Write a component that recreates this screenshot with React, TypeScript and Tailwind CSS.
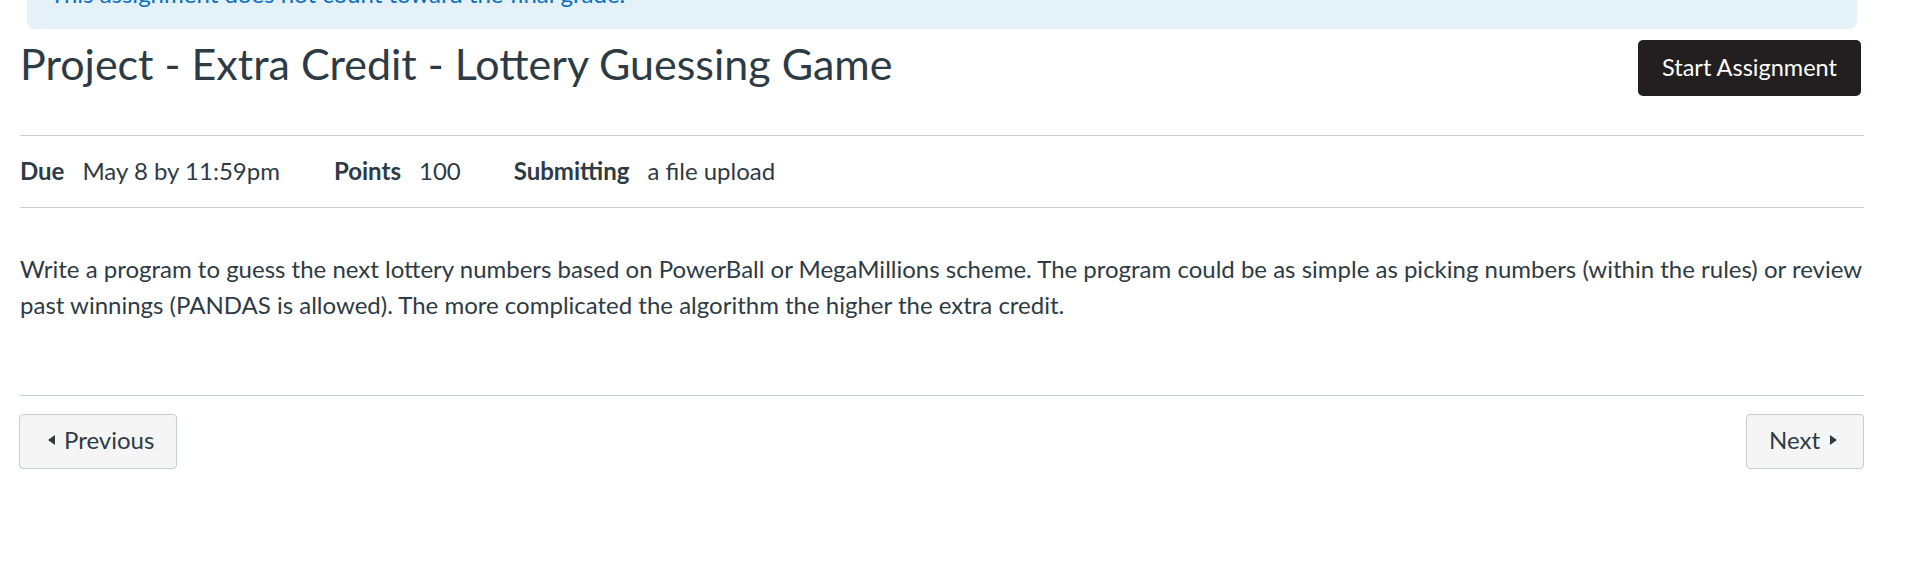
import React from "react";

function TriLeft() {
  return (
    <svg width="7" height="10" viewBox="0 0 7 10" className="shrink-0">
      <path d="M7 0 L0 5 L7 10 Z" fill="#2d3b45" />
    </svg>
  );
}

function TriRight() {
  return (
    <svg width="7" height="10" viewBox="0 0 7 10" className="shrink-0">
      <path d="M0 0 L7 5 L0 10 Z" fill="#2d3b45" />
    </svg>
  );
}

export default function App() {
  return (
    <div
      className="min-h-[580px] bg-white overflow-hidden text-[#2d3b45]"
      style={{ fontFamily: "Lato, 'Open Sans', 'Liberation Sans', sans-serif" }}
    >
      <div className="ml-[20px] w-[1844px]">
        {/* info banner, partly scrolled off */}
        <div className="mx-[7px] mt-[-30px] rounded-[8px] bg-[#e4f1f8] pt-[9px] pb-[20px] pl-[23px] text-[24px] leading-[30px] text-[#0770c0]">
          This assignment does not count toward the final grade.
        </div>

        {/* title row */}
        <div className="mt-[7px] flex items-start justify-between">
          <h1 className="text-[43px] leading-[56px] font-normal text-[#2d3b45]">
            Project - Extra Credit - Lottery Guessing Game
          </h1>
          <button className="mt-[4px] mr-[3px] h-[56px] w-[223px] rounded-[5px] bg-[#231f20] pb-[3px] text-[23.5px] leading-[30px] text-white">
            Start Assignment
          </button>
        </div>

        <div className="mt-[39px] h-px bg-[#c7cdd1]" />

        {/* details */}
        <div className="flex items-center pt-[20px] pb-[21px] text-[24px] leading-[30px]">
          <span className="font-bold">Due</span>
          <span className="ml-[18px]">May 8 by 11:59pm</span>
          <span className="ml-[54px] font-bold">Points</span>
          <span className="ml-[18px]">100</span>
          <span className="ml-[53px] font-bold">Submitting</span>
          <span className="ml-[18px]">a file upload</span>
        </div>

        <div className="h-px bg-[#c7cdd1]" />

        {/* description */}
        <p className="mt-[43px] text-[24px] leading-[35.5px]">
          Write a program to guess the next lottery numbers based on PowerBall or MegaMillions scheme. The program could be as simple as picking numbers (within the rules) or review past winnings (PANDAS is allowed). The more complicated the algorithm the higher the extra credit.
        </p>

        <div className="mt-[73px] h-px bg-[#c7cdd1]" />

        {/* nav buttons */}
        <div className="mt-[18px] flex items-center justify-between">
          <button className="ml-[-1px] flex h-[55px] w-[158px] items-center gap-[9px] rounded-[4px] border border-[#c7cdd1] bg-[#f5f5f5] pb-[4px] pl-[28px] text-[24px] leading-[30px] text-[#2d3b45]">
            <TriLeft />
            <span>Previous</span>
          </button>
          <button className="flex h-[55px] w-[118px] items-center gap-[10px] rounded-[4px] border border-[#c7cdd1] bg-[#f5f5f5] pb-[4px] pl-[22px] text-[24px] leading-[30px] text-[#2d3b45]">
            <span>Next</span>
            <TriRight />
          </button>
        </div>
      </div>
    </div>
  );
}
